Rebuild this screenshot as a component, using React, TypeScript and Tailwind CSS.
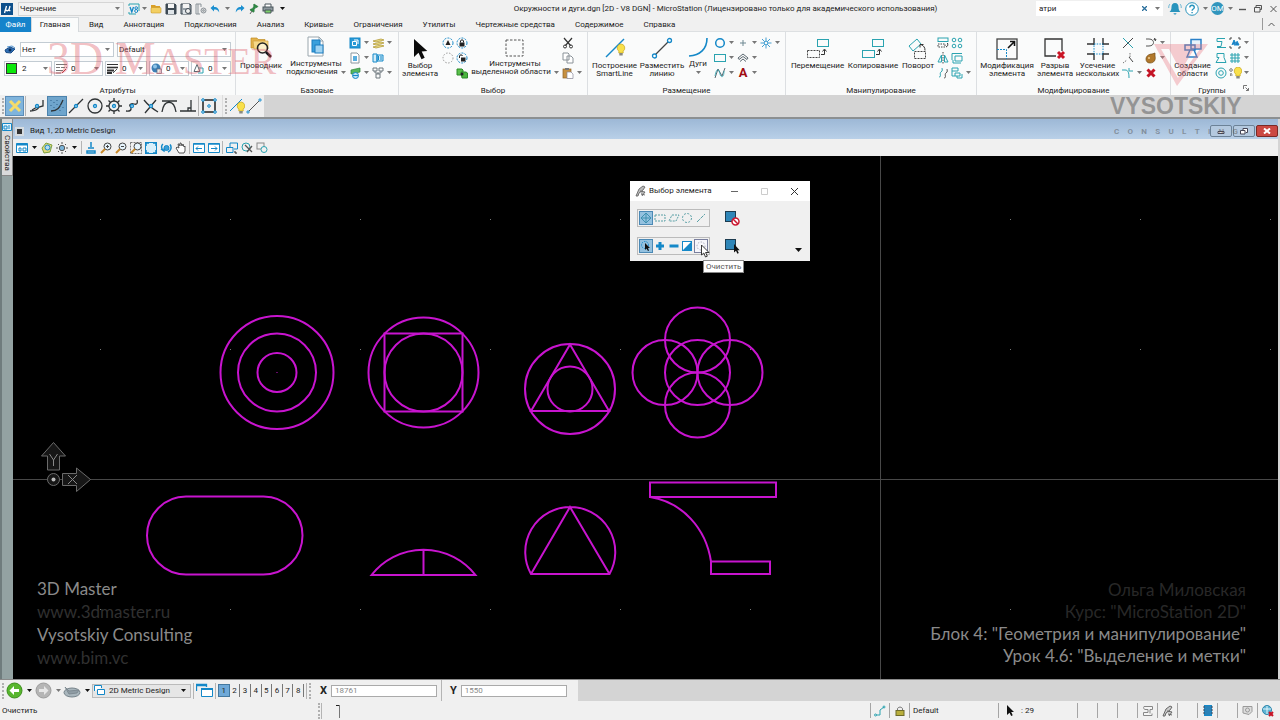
import { ReactNode } from "react";
import { twMerge } from "tailwind-merge";

const BLUE = "#1488c8";
const TEAL = "#2aa3b0";

type IconProps = { w?: number; h?: number; color?: string; sw?: number; children: ReactNode };

const Icon: React.FC<IconProps> = ({ w = 12, h = 12, color = BLUE, sw = 1, children }) => (
  <svg
    className="shrink-0"
    width={w}
    height={h}
    viewBox={`0 0 ${w} ${h}`}
    fill="none"
    stroke={color}
    strokeWidth={sw}
    aria-hidden="true"
  >
    {children}
  </svg>
);

const Caret: React.FC<{ dark?: boolean }> = ({ dark }) => (
  <svg className="shrink-0" width="5" height="3" viewBox="0 0 5 3" aria-hidden="true">
    <path d="M0 0h5L2.5 3z" fill={dark ? "#111" : "#777"} />
  </svg>
);

const Sep: React.FC<{ className?: string }> = ({ className }) => (
  <span className={twMerge("w-px h-4 bg-[#b4b4b4] shrink-0", className)} />
);

const Grip: React.FC = () => (
  <span className="w-[5px] h-4 shrink-0 flex justify-center">
    <span className="w-0 h-full border-l-2 border-dotted border-[#b0b0b0]" />
  </span>
);

/* Icons */
const Logo = () => (
  <Icon w={12} h={12}>
    <rect width="12" height="12" fill="#0d4f8b" stroke="none" />
    <path d="M3.500 10L5.500 3M5 6.500c0 2 2.500 1.500 3.200-.5L9 3M8.200 6c-.3 1.500 0 2 1.200 1.500" stroke="#fff" strokeWidth="1.300" />
  </Icon>
);
const V8 = () => (
  <Icon w={12} h={12}>
    <path d="M1 3V1h10v7M1 9v2h7" stroke={TEAL} />
    <path d="M2 4l1.800 5L5.500 4" strokeWidth="1.300" />
    <circle cx="8.200" cy="5" r="1.300" />
    <circle cx="8.200" cy="8" r="1.500" />
  </Icon>
);
const Folder = () => (
  <Icon w={12} h={10}>
    <path d="M1 3V1h4l1 1h4v7H1z" fill="#d99f26" stroke="none" />
    <rect x="1" y="3.500" width="10" height="5.500" rx="1" fill="#f3cf62" stroke="#c99a2e" strokeWidth=".6" />
  </Icon>
);
const Disk = ({ cog }: { cog?: boolean }) => (
  <Icon w={12} h={12} color="#3b4650">
    <path d="M1 1h9l1 1v9H1z" fill={cog ? "#9aa3aa" : "#3f4a54"} stroke="#3b4650" />
    <rect x="3" y="1" width="6" height="4" fill="#f4f4f4" stroke="none" />
    <rect x="3" y="7" width="6" height="4" fill="#dfe4e8" stroke="none" />
    {cog && <circle cx="8" cy="8" r="2.500" fill="#f0f0f0" />}
  </Icon>
);
const PageCog = () => (
  <Icon w={12} h={12} color="#8a9298">
    <path d="M1 11V1h5v3M1 11h4M3 1v10" />
    <circle cx="8.500" cy="7.500" r="2.500" fill="#ddd" />
    <circle cx="8.500" cy="7.500" r=".8" />
  </Icon>
);
const Undo = ({ flip }: { flip?: boolean }) => (
  <Icon w={10} h={10}>
    <path
      d={flip ? "M9.500 4L6 1v2C2.500 3 .8 5 .8 8.500 2 6 3.500 5.500 6 5.500V7.500z" : "M.5 4L4 1v2c3.500 0 5.200 2 5.200 5.500C8 6 6.500 5.500 4 5.500V7.500z"}
      fill="#1b8fd0"
      stroke="none"
    />
  </Icon>
);
const Pin = () => (
  <Icon w={10} h={12}>
    <path d="M5 1l4 2.500-1 1-1-.3-2 2.600.3 1.600-1 .8L1 7l.7-1 1.700-.2L5 3l-.5-1z" fill="#2f8b45" stroke="#1e6e33" strokeWidth=".6" />
    <path d="M3 8L1 11" stroke="#666" />
  </Icon>
);
const Printer = () => (
  <Icon w={12} h={11} color="#4a565d">
    <path d="M3 4V1h6v3" fill="#fff" />
    <rect x="1" y="4" width="10" height="4" fill="#8d989d" />
    <path d="M3 7h6v3H3z" fill="#7ccf6a" />
  </Icon>
);
const Bell = () => (
  <Icon w={14} h={14}>
    <path d="M7 1c-2.500 0-3.500 2-3.500 4 0 3-1 4-2 5h11c-1-1-2-2-2-5 0-2-1-4-3.500-4z" fill="#2a94bd" stroke="none" />
    <path d="M5.500 11.200h3c0 1.800-3 1.800-3 0z" fill="#2a94bd" stroke="none" />
    <path d="M2 2C1 3 .6 4.500.8 6M12 2c1 1 1.400 2.500 1.200 4" stroke="#6ab5d2" />
  </Icon>
);
const Help = () => (
  <Icon w={14} h={14} color="#2a94bd">
    <circle cx="7" cy="7" r="6.300" fill="#fff" />
    <path d="M4.800 5.500c0-3 4.500-3 4.500 0 0 1.500-2.200 1.500-2.200 3.200M7.100 10v1.300" strokeWidth="1.400" />
  </Icon>
);
const Eye = () => (
  <Icon w={12} h={12}>
    <path d="M1 6l5-3 5 2-4 4-5-.5z" fill="#2f6fb4" stroke="#1b4c86" />
    <path d="M3 3l5-1 3 2" stroke="#5594cf" />
    <circle cx="6" cy="6" r="1.500" fill="#0b2d58" stroke="none" />
  </Icon>
);
const LineStyle = ({ heavy }: { heavy?: boolean }) => (
  <Icon w={11} h={11} color={heavy ? "#333" : "#777"}>
    <path d="M0 1.500h11" />
    <path d="M0 4.500h11" strokeWidth={heavy ? 1.600 : 1} strokeDasharray={heavy ? undefined : "4 1"} />
    <path d="M0 7.500h7M0 10h5" strokeWidth={heavy ? 2 : 1} />
    <path d="M6 10l4-4" stroke={heavy ? "#555" : "#a33"} />
  </Icon>
);
const Globe = () => (
  <Icon w={11} h={11}>
    <circle cx="5" cy="5" r="4.500" fill="#3d7fb5" stroke="none" />
    <circle cx="4" cy="3.500" r="2" fill="#8fc4e8" stroke="none" />
    <rect x="6" y="6" width="4.500" height="4.500" fill="#e9eef2" stroke="#667" strokeWidth=".7" />
  </Icon>
);
const Shapes = () => (
  <Icon w={11} h={11}>
    <path d="M4 1.500L7 8.500H1z" stroke="#5a6a72" />
    <path d="M6 5h4v5H5" stroke={TEAL} />
  </Icon>
);

const Explorer = () => (
  <Icon w={24} h={24}>
    <path d="M2 1h6l1 1.500h7V11H2z" fill="#e3b34b" stroke="#c08e27" strokeWidth=".7" />
    <path d="M4 4h15v8H5z" fill="#f6d887" stroke="#cf9f3c" strokeWidth=".7" />
    <circle cx="13.500" cy="11" r="5" fill="#fdf6dc" fillOpacity=".8" stroke="#222" strokeWidth="1.600" />
    <path d="M17 15l5 5" stroke="#111" strokeWidth="2.500" />
  </Icon>
);
const AttachTools = () => (
  <Icon w={22} h={24} color="#9aa6ad">
    <path d="M3 1h11l4 4v15H3z" fill="#fff" />
    <path d="M14 1v4h4" />
    <rect x="7" y="4" width="8" height="12" fill="#3aa0dc" stroke="#1b7cc0" />
    <rect x="10" y="9" width="8" height="8" fill="#9fd3f2" stroke="#1b7cc0" />
  </Icon>
);
const Pointer = () => (
  <Icon w={18} h={24}>
    <path d="M3 2v18l4.500-4.200 3 6.400 3.200-1.500-3-6.200 5.600-.5z" fill="#0b0b0b" stroke="none" />
  </Icon>
);
const Marquee = () => (
  <Icon w={22} h={20} color="#555">
    <rect x="2" y="2" width="17" height="16" strokeDasharray="2.500 1.500" />
  </Icon>
);
const Bulb = ({ x, y }: { x: number; y: number }) => (
  <g transform={`translate(${x} ${y})`}>
    <path d="M4 0a4 4 0 0 0-2.200 7.200V9h4.400V7.200A4 4 0 0 0 4 0z" fill="#f9e04a" stroke="#c8a81c" strokeWidth=".7" />
    <rect x="2.300" y="9" width="3.400" height="2.500" fill="#8a8a80" stroke="none" />
  </g>
);
const SmartLine = () => (
  <Icon w={24} h={24}>
    <path d="M3 20L21 2" strokeWidth="1.500" />
    <Bulb x={14} y={7} />
  </Icon>
);
const LineTool = () => (
  <Icon w={22} h={24}>
    <path d="M4 18L18 4" stroke="#444" strokeWidth="1.200" />
    <circle cx="3.500" cy="19" r="2" fill="#fff" strokeWidth="1.300" />
    <circle cx="18.500" cy="3.500" r="2" fill="#fff" strokeWidth="1.300" />
  </Icon>
);
const ArcTool = () => (
  <Icon w={22} h={22}>
    <path d="M20 1c0 11-7 17.500-18 18" strokeWidth="1.600" />
  </Icon>
);
const MoveTool = ({ copy }: { copy?: boolean }) => (
  <Icon w={24} h={24} color={TEAL}>
    <rect x="11.500" y="2.500" width="11" height="7" />
    <rect x="1.500" y="13.500" width="12" height="7" stroke={copy ? TEAL : "#444"} strokeDasharray={copy ? undefined : "2 1"} />
    <path d="M15 17.500h3.500V13M16.500 14.500l2-2.500 2 2.500" stroke="#333" />
  </Icon>
);
const RotateTool = () => (
  <Icon w={22} h={24} color={TEAL}>
    <path d="M2 9l8-7 4 5-8 7z" />
    <rect x="7.500" y="14.500" width="11" height="7" stroke="#444" strokeDasharray="2 1" />
    <path d="M18 13.500c0-3-1-4.500-4-6M16.500 7.500H13v3" stroke="#333" />
  </Icon>
);
const ModifyTool = () => (
  <Icon w={24} h={24} color="#444">
    <rect x="2" y="2" width="20" height="20" strokeWidth="1.300" />
    <path d="M2 12.500h9.500V22" stroke={BLUE} strokeDasharray="2 1" />
    <path d="M13 11l6-6M15 4.500h4.500V9" stroke="#111" strokeWidth="1.600" />
  </Icon>
);
const BreakTool = () => (
  <Icon w={24} h={24} color="#333">
    <path d="M13 19H2V2h17v12" strokeWidth="1.300" />
    <path d="M15 15l6 6M21 15l-6 6" stroke="#cb1526" strokeWidth="3" />
  </Icon>
);
const TrimTool = () => (
  <Icon w={24} h={24} color="#333">
    <path d="M8 1v7M8 16v7M17 1v7M17 16v7M1 7h7M16 7h7M1 17h7M16 17h7" strokeWidth="1.400" />
    <path d="M8 7h9v10H8z" stroke={BLUE} strokeDasharray="1.500 1.200" />
  </Icon>
);
const RegionTool = () => (
  <Icon w={20} h={24} color="#2a80c8" sw={1.500}>
    <path d="M8 2.500h10v9.500H8z" fill="#e8f3fb" />
    <path d="M2 8h10v5H2z" />
    <path d="M7 13l-3 7h10l-3-7" />
  </Icon>
);

const rowIcons = {
  cube: (
    <Icon>
      <rect x="1" y="1" width="10" height="10" fill="#2a9ad6" />
      <path d="M3.500 4.500h4v4h-4zM5 3h4v4" stroke="#fff" />
    </Icon>
  ),
  layers: (
    <Icon w={13}>
      <path d="M1 4l8-2 3 1-8 2zM1 7l8-2 3 1-8 2zM1 10l8-2 3 1-8 2z" fill="#f2e48c" stroke="#b29b38" strokeWidth=".8" />
    </Icon>
  ),
  doc: (
    <Icon color="#8a969d">
      <path d="M2 1h6l2 2v8H2z" fill="#fff" />
      <rect x="4" y="4" width="4" height="5" fill="#59aede" stroke="none" />
    </Icon>
  ),
  sheet: (
    <Icon>
      <path d="M1 2h4v8H1zM5 3h6v6H5z" fill="#d2ecf8" />
      <path d="M6.500 4v4M9 4v4" />
    </Icon>
  ),
  raster: (
    <Icon w={13}>
      <path d="M2 3l9-2v4L2 7z" fill="#55b65e" stroke="#2d8437" strokeWidth=".7" />
      <circle cx="6.500" cy="8.500" r="3" fill="#bfe3f5" />
      <path d="M4 8.500h5" />
    </Icon>
  ),
  tree: (
    <Icon color="#6d777d">
      <path d="M1 1h4v3H1zM7 1h4v3H7zM4 7h4v4H4zM3 4v2h6V4M6 6v1" />
    </Icon>
  ),
  selNew: (
    <Icon>
      <circle cx="6" cy="6" r="5" strokeDasharray="2 1.200" />
      <path d="M6 3l2.500 5h-5z" fill="#222" stroke="none" />
    </Icon>
  ),
  selLock: (
    <Icon>
      <circle cx="6" cy="6" r="5" strokeDasharray="2 1.200" />
      <rect x="3.500" y="5.500" width="5" height="4" fill="#222" stroke="none" />
      <path d="M4.500 5.500V4c0-1.500 3-1.500 3 0v1.500" stroke="#222" />
    </Icon>
  ),
  selNone: (
    <Icon color="#999">
      <circle cx="6" cy="6" r="5" strokeDasharray="1.500 1.500" />
    </Icon>
  ),
  selUnlock: (
    <Icon>
      <circle cx="6" cy="6" r="5" strokeDasharray="2 1.200" />
      <rect x="5" y="5.500" width="4.500" height="4" fill="#222" stroke="none" />
      <path d="M3.500 6V4c0-1.500 3-1.500 3 0" stroke="#222" />
    </Icon>
  ),
  group: (
    <Icon w={13}>
      <path d="M1 2h5l1 1v5H1z" fill="#5ac04b" stroke="#2c8a29" />
      <path d="M5 5h5l1.500 1v5H6z" fill="#4bb53e" stroke="#2c8a29" />
      <circle cx="6" cy="7" r="1.500" fill="#222" stroke="none" />
    </Icon>
  ),
  cut: (
    <Icon color="#333">
      <path d="M2 1l6.500 7.500M10 1L3.500 8.500" strokeWidth="1.200" />
      <circle cx="3" cy="9.500" r="1.500" />
      <circle cx="9" cy="9.500" r="1.500" />
    </Icon>
  ),
  copy: (
    <Icon color="#8a9298">
      <path d="M1 1h5l1 1v6H1zM5 4h4l2 2v5H5z" fill="#fff" />
    </Icon>
  ),
  paste: (
    <Icon>
      <rect x="1" y="2" width="8" height="9" fill="#c69040" stroke="#8d6224" strokeWidth=".7" />
      <rect x="3" y="1" width="4" height="2" fill="#777" stroke="none" />
      <path d="M5 5h4l2 2v4.500H5z" fill="#fff" stroke="#889" strokeWidth=".7" />
    </Icon>
  ),
  circle: (
    <Icon>
      <circle cx="6" cy="6" r="4.300" strokeWidth="1.500" />
    </Icon>
  ),
  plus: (
    <Icon color="#6d8791">
      <path d="M6 3v6M3 6h6" />
    </Icon>
  ),
  spark: (
    <Icon>
      <circle cx="6" cy="6" r="2" />
      <path d="M6 .5v3M6 8.500v3M.5 6h3M8.500 6h3M2 2l2 2M8 8l2 2M10 2L8 4M4 8l-2 2" strokeWidth=".8" />
    </Icon>
  ),
  rect: (
    <Icon color={TEAL}>
      <rect x=".5" y="2.500" width="11" height="7" />
    </Icon>
  ),
  chevrons: (
    <Icon color="#5b6870">
      <path d="M1 6l5-4 5 4-1 1.500L6 4.500 2 7.500zM3 9.500l3-2.500 3 2.500" />
    </Icon>
  ),
  curve: (
    <Icon color="#5b6870">
      <path d="M1 11L4 2l4 7 3-8" />
      <path d="M1 9c2-10 4-6 5-2s4 4 4-3" stroke={TEAL} strokeWidth=".8" />
    </Icon>
  ),
  text: <span className="font-bold text-[13px] leading-3 text-[#a00c12]">A</span>,
  offset: (
    <Icon color={TEAL}>
      <rect x="1" y="1" width="10" height="3.500" />
      <path d="M1 7h7v3H1z" stroke="#444" strokeDasharray="1.500 1" />
      <path d="M9 10c2-1 2-2 1.500-4" stroke="#333" />
    </Icon>
  ),
  array: (
    <Icon color={TEAL}>
      <circle cx="3" cy="3" r="1.800" />
      <circle cx="9" cy="3" r="1.800" />
      <circle cx="3" cy="9" r="1.800" />
      <circle cx="9" cy="9" r="1.800" />
    </Icon>
  ),
  mirror: (
    <Icon color={TEAL}>
      <path d="M4.500 3v7H1zM7.500 3v7H11z" />
      <path d="M6 0v12" stroke="#444" strokeDasharray="1.500 1" />
    </Icon>
  ),
  scale: (
    <Icon color={TEAL}>
      <path d="M1 1.500h10M1 1.500V8M4 4h7v5H4zM2 8v3h8" />
    </Icon>
  ),
  stretch: (
    <Icon color={TEAL}>
      <path d="M2 10c3 0 0-4 2-5s1-3 1-4" />
      <path d="M7 11c3 0 0-4 2-5s1-3 1-4" stroke="#555" />
    </Icon>
  ),
  align: (
    <Icon color={TEAL}>
      <path d="M1 1h6v3H1zM1 4v5h3M4 6h5v3H4zM6 9v2h5V7" />
    </Icon>
  ),
  trimX: (
    <Icon color="#444">
      <path d="M1 11L11 1" />
      <path d="M1 1l10 10" stroke={TEAL} />
    </Icon>
  ),
  extend: (
    <Icon color="#444">
      <path d="M7 5l4 5" />
      <path d="M1 11l4-3M8 5V1" stroke="#777" strokeDasharray="1.500 1" />
    </Icon>
  ),
  fillet: (
    <Icon color={TEAL}>
      <path d="M0 3h3c3 0 4 2 4 8M7 1v3h4" />
    </Icon>
  ),
  fence: (
    <Icon color="#555">
      <path d="M1 2h3c6 0 6 7 0 7H1" />
      <path d="M9 3l1-2M10 4l1-2" stroke="#222" />
    </Icon>
  ),
  hatch: (
    <Icon>
      <path d="M1 7c0-3 3-5 6-5l3-1v3c1 4-1 7-5 7-3 0-4-2-4-4z" fill="#b1782b" stroke="#734c17" strokeWidth=".7" />
      <circle cx="4" cy="6" r="1" fill="#efcf96" stroke="none" />
    </Icon>
  ),
  del: (
    <Icon color="#c41425" sw={3}>
      <path d="M2.500 2.500l7 7M9.500 2.500l-7 7" />
    </Icon>
  ),
  chain: (
    <Icon color={TEAL}>
      <path d="M2 1.500h8M2 1.500v3h5l-1 5H2M2 10.500h9" />
    </Icon>
  ),
  ungroup: (
    <Icon>
      <path d="M1 3V1h2M9 1h2v2M11 9v2H9M3 11H1V9" stroke="#444" />
      <path d="M3 8l2-5 2 4M5 8h5l-2-4" fill="#1c7fc5" />
    </Icon>
  ),
  shape: (
    <Icon color={TEAL}>
      <path d="M2 1.500h7v4l2 5H1l3-5H2z" />
    </Icon>
  ),
  hash: (
    <Icon color={TEAL}>
      <path d="M3 1v10M6 1v10M9 1v10M1 3h10M1 6h10M1 9h10" />
    </Icon>
  ),
  target: (
    <Icon color={TEAL}>
      <circle cx="6" cy="6" r="5" />
      <circle cx="6" cy="6" r="2.300" />
    </Icon>
  ),
  bulb: (
    <Icon w={13} color="#555">
      <path d="M0 3h4M2 1v8M1 8h3" strokeDasharray="1.500 1" />
      <Bulb x={5} y={0} />
    </Icon>
  ),
};

/* Ribbon parts */
type SmallItem = { label: string; icon: ReactNode; caret?: boolean };

const Stack: React.FC<{ items: (SmallItem | null)[]; className?: string }> = ({ items, className }) => (
  <div className={twMerge("flex flex-col items-start shrink-0", className)}>
    {items.map((item, index) =>
      item ? (
        <button key={index} aria-label={item.label} className="h-[15px] flex items-center">
          <span className="w-[14px] flex justify-center">{item.icon}</span>
          {item.caret && (
            <span className="w-[9px] flex justify-center">
              <Caret />
            </span>
          )}
        </button>
      ) : (
        <span key={index} className="h-[15px]" />
      )
    )}
  </div>
);

const BigButton: React.FC<{ icon: ReactNode; lines: string[]; caret?: boolean; className?: string }> = ({
  icon,
  lines,
  caret,
  className,
}) => (
  <button className={twMerge("shrink-0 flex flex-col items-center leading-2 whitespace-nowrap", className)}>
    <span className={twMerge("h-[27px] flex items-center", caret && "h-[25px]")}>{icon}</span>
    {lines.map((line, index) => (
      <span key={line} className="flex items-center gap-[3px]">
        {line}
        {caret && lines.length > 1 && index === lines.length - 1 && <Caret />}
      </span>
    ))}
    {caret && lines.length === 1 && (
      <span className="h-2 flex items-center">
        <Caret />
      </span>
    )}
  </button>
);

const Group: React.FC<{ title: string; className?: string; children: ReactNode }> = ({ title, className, children }) => (
  <section className={twMerge("relative shrink-0 flex flex-col border-r border-[#dcdfe2]", className)}>
    <div className="flex items-start pt-[3px] h-[51px]">{children}</div>
    <h2 className="text-center leading-[15px] h-3">{title}</h2>
  </section>
);

const Combo: React.FC<{ label: string; value: string; icon?: ReactNode; className?: string }> = ({
  label,
  value,
  icon,
  className,
}) => (
  <label className={twMerge("relative flex items-center gap-1 h-[15px] px-px border border-[#c3ccd3] bg-white", className)}>
    {icon}
    <select aria-label={label} className="appearance-none flex-1 min-w-0 h-full bg-transparent outline-none">
      <option>{value}</option>
    </select>
    <span className="absolute right-[3px]">
      <Caret />
    </span>
  </label>
);

const tabs = [
  "Вид",
  "Аннотация",
  "Подключения",
  "Анализ",
  "Кривые",
  "Ограничения",
  "Утилиты",
  "Чертежные средства",
  "Содержимое",
  "Справка",
];

const quickTools: { label: string; icon: ReactNode; className: string }[] = [
  { label: "Открыть", icon: <Folder />, className: "w-[14px]" },
  { label: "Сохранить", icon: <Disk />, className: "w-[15px]" },
  { label: "Сохранить настройки", icon: <Disk cog />, className: "w-[15px]" },
  { label: "Сжать", icon: <PageCog />, className: "w-[15px]" },
  { label: "Отменить", icon: <Undo />, className: "w-[14px]" },
  { label: "История", icon: <Caret />, className: "w-[10px]" },
  { label: "Повторить", icon: <Undo flip />, className: "w-[15px]" },
  { label: "Закрепить", icon: <Pin />, className: "w-[14px]" },
  { label: "Печать", icon: <Printer />, className: "w-[14px]" },
  { label: "Настройка панели", icon: <Caret dark />, className: "w-[14px]" },
];

const TitleBar = () => (
  <header className="h-[17px] flex items-center shrink-0 bg-[#f0f0f0]">
    <span className="w-[18px] pl-px">
      <Logo />
    </span>
    <Combo label="Рабочий процесс" value="Черчение" className="w-[106px] h-[14px] bg-[#f3f3f3] border-[#d5d5d5]" />
    <button aria-label="DGN" className="flex items-center gap-[2px] pl-1 w-[25px]">
      <V8 />
      <Caret />
    </button>
    {quickTools.map((tool) => (
      <button key={tool.label} aria-label={tool.label} className={twMerge("flex justify-center", tool.className)}>
        {tool.icon}
      </button>
    ))}
    <h1 className="flex-1 pl-[126px] whitespace-nowrap text-center">
      Окружности и дуги.dgn [2D - V8 DGN] - MicroStation (Лицензировано только для академического использования)
    </h1>
    <label className="flex items-center w-[127px] h-[15px] bg-white px-[3px] gap-2">
      <input aria-label="Поиск" defaultValue="атри" className="flex-1 min-w-0 outline-none" />
      <Icon w={5} h={5} color="#2a6f9c" sw={1.300}>
        <path d="M0 0l5 5M5 0L0 5" />
      </Icon>
      <Caret />
    </label>
    <div className="flex items-center gap-[3px] pl-[5px] w-[117px]">
      <button aria-label="Уведомления">
        <Bell />
      </button>
      <button aria-label="Помощь" className="flex items-center gap-1">
        <Help />
        <Caret />
      </button>
      <button className="flex items-center gap-1">
        <span className="size-[13px] rounded-full bg-[#3195bd] text-white text-center leading-[13px]">OM</span>
        <Caret />
      </button>
      <button aria-label="Свернуть" className="ml-auto mr-[5px]">
        <Icon w={7} h={8} color="#555">
          <path d="M0 4.500h7" strokeWidth="1.400" />
        </Icon>
      </button>
      <button aria-label="Восстановить" className="mr-[5px]">
        <Icon w={8} h={8} color="#555">
          <path d="M2 2V.5h5.500v4H6M.5 2.500H6V7H.500z" />
        </Icon>
      </button>
      <button aria-label="Закрыть" className="mr-[3px]">
        <Icon w={7} h={8} color="#555">
          <path d="M.5 1l6 6M6.500 1l-6 6" />
        </Icon>
      </button>
    </div>
  </header>
);

const TabBar = () => (
  <nav className="flex items-stretch h-[15px] shrink-0 bg-[#f0f0f0] leading-4">
    <button className="w-[31px] bg-[#1583cb] text-white">Файл</button>
    <button className="w-[48px] bg-[#fafbfb] border border-b-0 border-[#d5d9dc] leading-[14px]">Главная</button>
    <div className="flex flex-1 border-b border-[#dde0e2]">
      {tabs.map((tab) => (
        <button key={tab} className="px-[10px] whitespace-nowrap">
          {tab}
        </button>
      ))}
      <button aria-label="Свернуть ленту" className="ml-auto w-[18px] my-px border-l border-[#999] flex items-center justify-center">
        <Icon w={7} h={5} color="#555">
          <path d="M.5 4l3-3 3 3" />
        </Icon>
      </button>
    </div>
  </nav>
);

const Watermarks = () => (
  <div className="absolute inset-0 pointer-events-none">
    <div className="absolute left-[47px] top-1 font-['Liberation_Serif',serif] text-[#de5a66]/40 text-[46px] leading-[46px] whitespace-nowrap">
      3D M<span className="text-[38px]">ASTER</span>
    </div>
    <svg className="absolute right-[72px] top-3" width="54" height="42" viewBox="0 0 54 42" aria-hidden="true">
      <path d="M0 0h54L23 42zM7 5l17 29L27 28 15 5zM31 20l9-15h6L33 23z" fill="#e7737d" fillOpacity=".35" fillRule="evenodd" />
    </svg>
    <div className="absolute right-[38px] top-[60px] w-[132px] text-[#555]/50">
      <div className="font-['Liberation_Sans',sans-serif] font-bold text-[23px] leading-7">VYSOTSKIY</div>
      <div className="flex justify-between px-1 pt-[6px] font-bold leading-3">
        {"CONSULTING".split("").map((letter, index) => (
          <span key={index}>{letter}</span>
        ))}
      </div>
    </div>
  </div>
);

const Ribbon = () => (
  <div className="relative flex h-[63px] shrink-0 bg-[#fafbfb]">
    <Group title="Атрибуты" className="w-[236px]">
      <div className="flex-1 flex flex-col gap-1 pt-[7px] pl-1 pr-1">
        <div className="flex items-center gap-[3px]">
          <span className="w-[13px]">
            <Eye />
          </span>
          <Combo label="Шаблон" value="Нет" className="w-[94px]" />
          <Combo label="Слой" value="Default" className="flex-1" />
        </div>
        <div className="flex items-center gap-[2px]">
          <Combo
            label="Цвет"
            value="2"
            className="w-12 gap-[5px]"
            icon={<span className="size-[11px] bg-[#0be80b] border border-[#333] shrink-0" />}
          />
          <Combo label="Стиль линии" value="0" className="w-[49px]" icon={<LineStyle />} />
          <Combo label="Толщина" value="0" className="w-[42px]" icon={<LineStyle heavy />} />
          <Combo label="Прозрачность" value="0" className="flex-1" icon={<Globe />} />
          <Combo label="Приоритет" value="0" className="flex-1" icon={<Shapes />} />
        </div>
      </div>
    </Group>
    <Group title="Базовые" className="w-[163px]">
      <BigButton icon={<Explorer />} lines={["Проводник"]} className="w-[50px]" />
      <BigButton icon={<AttachTools />} lines={["Инструменты", "подключения"]} caret className="w-[60px]" />
      <Stack
        className="ml-[2px]"
        items={[
          { label: "Модели", icon: rowIcons.cube, caret: true },
          { label: "Ссылки", icon: rowIcons.doc, caret: true },
          { label: "Растры", icon: rowIcons.raster, caret: true },
        ]}
      />
      <Stack
        items={[
          { label: "Слои", icon: rowIcons.layers, caret: true },
          { label: "Фильтр слоев", icon: rowIcons.sheet },
          { label: "Структура", icon: rowIcons.tree, caret: true },
        ]}
      />
    </Group>
    <Group title="Выбор" className="w-[189px]">
      <BigButton icon={<Pointer />} lines={["Выбор", "элемента"]} className="w-[42px]" />
      <Stack
        items={[
          { label: "Выбрать все", icon: rowIcons.selNew },
          { label: "Снять выбор", icon: rowIcons.selNone },
          null,
        ]}
      />
      <Stack
        items={[
          { label: "Заблокировать", icon: rowIcons.selLock },
          { label: "Разблокировать", icon: rowIcons.selUnlock },
          { label: "Изменить группу", icon: rowIcons.group },
        ]}
      />
      <BigButton icon={<Marquee />} lines={["Инструменты", "выделенной области"]} caret className="w-[92px]" />
      <Stack
        items={[
          { label: "Вырезать", icon: rowIcons.cut },
          { label: "Копировать", icon: rowIcons.copy },
          { label: "Вставить", icon: rowIcons.paste, caret: true },
        ]}
      />
    </Group>
    <Group title="Размещение" className="w-[198px]">
      <BigButton icon={<SmartLine />} lines={["Построение", "SmartLine"]} className="w-[53px]" />
      <BigButton icon={<LineTool />} lines={["Разместить", "линию"]} className="w-[42px]" />
      <BigButton icon={<ArcTool />} lines={["Дуги"]} caret className="w-[30px]" />
      <Stack
        items={[
          { label: "Окружность", icon: rowIcons.circle, caret: true },
          { label: "Блок", icon: rowIcons.rect, caret: true },
          { label: "Кривая", icon: rowIcons.curve, caret: true },
        ]}
      />
      <Stack
        items={[
          { label: "Точка", icon: rowIcons.plus, caret: true },
          { label: "Мультилиния", icon: rowIcons.chevrons, caret: true },
          { label: "Текст", icon: rowIcons.text, caret: true },
        ]}
      />
      <Stack items={[{ label: "Ячейка", icon: rowIcons.spark, caret: true }]} />
    </Group>
    <Group title="Манипулирование" className="w-[191px]">
      <BigButton icon={<MoveTool />} lines={["Перемещение"]} className="w-[57px] ml-[3px]" />
      <BigButton icon={<MoveTool copy />} lines={["Копирование"]} className="w-[54px]" />
      <BigButton icon={<RotateTool />} lines={["Поворот"]} className="w-[36px]" />
      <Stack
        items={[
          { label: "Подобие", icon: rowIcons.offset },
          { label: "Отражение", icon: rowIcons.mirror },
          { label: "Растяжение", icon: rowIcons.stretch },
        ]}
      />
      <Stack
        items={[
          { label: "Массив", icon: rowIcons.array },
          { label: "Масштаб", icon: rowIcons.scale },
          { label: "Выравнивание", icon: rowIcons.align, caret: true },
        ]}
      />
    </Group>
    <Group title="Модифицирование" className="w-[194px]">
      <BigButton icon={<ModifyTool />} lines={["Модификация", "элемента"]} className="w-[58px] ml-px" />
      <BigButton icon={<BreakTool />} lines={["Разрыв", "элемента"]} className="w-[38px]" />
      <BigButton icon={<TrimTool />} lines={["Усечение", "нескольких"]} className="w-[47px]" />
      <Stack
        items={[
          { label: "Усечь", icon: rowIcons.trimX },
          { label: "Продлить", icon: rowIcons.extend },
          { label: "Сопряжение", icon: rowIcons.fillet, caret: true },
        ]}
      />
      <Stack
        items={[
          { label: "Вершина", icon: rowIcons.fence, caret: true },
          { label: "Штриховка", icon: rowIcons.hatch, caret: true },
          { label: "Удалить", icon: rowIcons.del },
        ]}
      />
    </Group>
    <Group title="Группы" className="w-[83px]">
      <BigButton icon={<RegionTool />} lines={["Создание", "области"]} className="w-[43px]" />
      <Stack
        items={[
          { label: "Цепочка", icon: rowIcons.chain },
          { label: "Форма", icon: rowIcons.shape },
          { label: "Отверстие", icon: rowIcons.target },
        ]}
      />
      <Stack
        items={[
          { label: "Разгруппировать", icon: rowIcons.ungroup, caret: true },
          { label: "Сетка", icon: rowIcons.hash, caret: true },
          { label: "Группа", icon: rowIcons.bulb, caret: true },
        ]}
      />
      <button aria-label="Параметры групп" className="absolute right-1 bottom-1">
        <Icon w={6} h={6} color="#777">
          <path d="M.5 4V.5H4M2.500 2.500l3 3M5.500 3v2.500H3" />
        </Icon>
      </button>
    </Group>
    <Watermarks />
  </div>
);

const snapIcons: { label: string; icon: ReactNode }[] = [
  { label: "Ближайшая", icon: <path d="M1 13c6 0 8-2 9-4l4-1V2M3 12l5-3" /> },
  { label: "Ключевая точка", icon: <><path d="M2 13c8 0 9-5 12-11" /><path d="M2 2v1M5 4v1M8 2v1M2 7v1M5 9v1M11 7v1M8 6v1M11 12v1M14 9v1" stroke="#3c6f98" /></> },
  { label: "Средняя точка", icon: <path d="M1 15L15 1" /> },
  { label: "Центр", icon: <circle cx="8" cy="8" r="7" /> },
  { label: "Точка вставки", icon: <><circle cx="8" cy="8" r="5" /><path d="M8 0v3M8 13v3M0 8h3M13 8h3M2.500 2.500l2 2M11.500 11.500l2 2M13.500 2.500l-2 2M4.500 11.500l-2 2" /></> },
  { label: "Бисектор", icon: <path d="M2 13c7 1 5-4 4-5s1-3 4-2 4-1 3-4" /> },
  { label: "Пересечение", icon: <path d="M1 2c4 5 9 9 14 12M2 15L13 2" /> },
  { label: "Касательная", icon: <path d="M1 3h15M1 14C3 1 13 1 15 14" /> },
  { label: "Перпендикуляр", icon: <path d="M0 13h16M11 13V2M8 13v-3h3" /> },
];

const SnapBar = () => (
  <div className="flex h-[24px] shrink-0 bg-[#d4d4d4] border-b-2 border-[#8b8f91]">
    <div className="flex items-center bg-[#f0f0f0] pr-1">
      <Grip />
      <button aria-label="AccuSnap" className="w-[19px] h-[20px] bg-[#7fb4dc] border border-[#5b8db8] flex items-center justify-center">
        <Icon w={14} h={14} color="#f5dc6a" sw={3}>
          <path d="M2 2l10 10M12 2L2 12" />
        </Icon>
      </button>
      <Sep className="ml-px mr-[2px] h-5" />
      <div className="flex w-[169px]">
        {snapIcons.map((snap, index) => (
          <button
            key={snap.label}
            aria-label={snap.label}
            className={twMerge("flex-1 h-5 flex items-center justify-center", index === 1 && "bg-[#6fa5cc] border border-[#4c83ad]")}
          >
            <Icon w={16} h={16} color="#2f3335" sw={1.300}>
              {snap.icon}
              {index !== 1 && index < 7 && <circle cx="8" cy="8" r="1.500" fill="#bfe6fa" stroke={BLUE} />}
            </Icon>
          </button>
        ))}
      </div>
      <Sep className="mx-px h-5" />
      <button aria-label="Мультипривязка" className="px-px">
        <Icon w={16} h={16} color="#222">
          <rect x="2" y="2" width="12" height="12" strokeWidth="1.500" />
          <g fill="#bfe6fa" stroke={BLUE}>
            <circle cx="2" cy="2" r="1.300" />
            <circle cx="14" cy="2" r="1.300" />
            <circle cx="2" cy="14" r="1.300" />
            <circle cx="14" cy="14" r="1.300" />
            <circle cx="8" cy="8" r="1.300" />
          </g>
        </Icon>
      </button>
    </div>
    <div className="flex items-center bg-[#f0f0f0] border-l border-[#ddd] pr-px">
      <Grip />
      <button aria-label="SmartLine" className="pl-px">
        <Icon w={16} h={16}>
          <path d="M1 13L13 1" />
          <Bulb x={8} y={4} />
        </Icon>
      </button>
      <button aria-label="Линия" className="px-px">
        <Icon w={16} h={16} color="#555">
          <path d="M2 14L14 2" />
          <path d="M1 13h2v2H1zM13 1h2v2h-2z" fill="#bfe6fa" stroke={BLUE} strokeWidth=".8" />
        </Icon>
      </button>
    </div>
  </div>
);

const lens = (extra: ReactNode) => (
  <Icon color="#444">
    <circle cx="7.500" cy="4.500" r="3.500" fill="#e6f4fc" />
    <path d="M5 7L1 11" stroke="#c98a2a" strokeWidth="2" />
    {extra}
  </Icon>
);

type ViewTool = { label: string; icon: ReactNode; className?: string; sep?: boolean };

const viewTools: ViewTool[] = [
  { label: "Параметры вида", className: "w-[15px]", icon: <Icon><path d="M.5 1.500h11v9H.5z" fill="#fff" /><path d="M.5 2.500h11" strokeWidth="2" /><path d="M3 6h2v3H3zM7 6h3v3H7z" /></Icon> },
  { label: "Список видов", className: "w-[10px]", icon: <Caret dark /> },
  { label: "Стиль отображения", className: "w-[15px]", icon: <Icon><path d="M1 6l4-5 6 2-2 7-6 1z" fill="#e0d87a" stroke="#7da13e" /><circle cx="6.500" cy="5.500" r="2.500" fill="#b6dcf0" /></Icon> },
  { label: "Яркость", className: "w-[15px]", icon: <Icon color="#555"><circle cx="6" cy="6" r="2.700" fill="#79b3d8" /><path d="M6 0v2M6 10v2M0 6h2M10 6h2M2 2l1 1M9 9l1 1M10 2L9 3M3 9l-1 1" /></Icon> },
  { label: "Список яркости", className: "w-[11px]", icon: <Caret dark />, sep: true },
  { label: "Обновить", icon: <Icon><path d="M6 0v5M3 6h6M2 9h8v2H2z" strokeWidth="1.500" /></Icon> },
  { label: "Увеличить", icon: lens(<path d="M6 4.500h3M7.500 3v3" />) },
  { label: "Уменьшить", icon: lens(<path d="M6 4.500h3" />) },
  { label: "Окно", icon: lens(<path d="M.5 .5h11v11H.5z" strokeDasharray="2 1" strokeWidth=".7" />) },
  { label: "Вписать", icon: <Icon><rect x=".5" y=".5" width="11" height="11" fill="#d8effa" /><path d="M1 4V1h3M8 1h3v3M11 8v3H8M4 11H1V8" strokeWidth="1.500" /></Icon> },
  { label: "Повернуть", icon: <Icon><path d="M3 2C1 3.500 1 7 3.500 8.500M1 7l3 2 .5-3M8 10c3-1 4-5 2-7.500" strokeWidth="1.500" /><circle cx="6.500" cy="6" r="2.500" fill="#3b9fd8" /></Icon> },
  { label: "Панорама", sep: true, icon: <Icon color="#444"><path d="M4 11L1 6l1-1 2 1-1-4h1l1 2V1h1l1 3 1-2 1 3 1-1v5l-1 2z" fill="#fff" strokeWidth=".9" /></Icon> },
  { label: "Предыдущий вид", icon: <Icon><path d="M.5 1.500h11v9H.5z" fill="#fff" /><path d="M.5 2h11" strokeWidth="1.500" /><path d="M9 6.500H3M5 4.500l-2 2 2 2" /></Icon> },
  { label: "Следующий вид", sep: true, icon: <Icon><path d="M.5 1.500h11v9H.5z" fill="#fff" /><path d="M.5 2h11" strokeWidth="1.500" /><path d="M3 6.500h6M7 4.500l2 2-2 2" /></Icon> },
  { label: "Копировать вид", icon: <Icon><path d="M4 5V1h7.500v6H8M.5 5.500H7v5H.5z" /><path d="M9 9v2h2" stroke="#222" /></Icon> },
  { label: "Отсечь", icon: <Icon color="#555"><circle cx="5" cy="5" r="4" stroke={TEAL} /><path d="M4 3l7 7M11 4l-5 6" strokeWidth="1.300" /></Icon> },
  { label: "Маска", icon: <Icon color="#888"><rect x="1" y="1" width="7" height="6" /><circle cx="8" cy="7.500" r="3" fill="#f0f0f0" stroke={TEAL} /></Icon> },
];

const winButton = "w-[22px] h-3 border border-[#6c8297] rounded-xs flex items-center justify-center";

const ViewHeader = () => (
  <>
    <div className="flex items-center h-5 shrink-0 bg-linear-to-b from-[#9db8d6] to-[#b9d0e8] px-1 pt-1">
      <span className="size-[5px] bg-[#333] outline-2 outline-[#d5dbe0]" />
      <span className="pl-2">Вид 1, 2D Metric Design</span>
      <div className="flex gap-px ml-auto -mr-1">
        <button aria-label="Свернуть вид" className={twMerge(winButton, "bg-[#b4c9df]")}>
          <Icon w={8} h={5} color="#445"><path d="M1 2.500h6v2H1z" fill="#fff" /></Icon>
        </button>
        <button aria-label="Развернуть вид" className={twMerge(winButton, "bg-[#b4c9df]")}>
          <Icon w={8} h={7} color="#445"><path d="M3 2V.5h4.500v4H6M.5 2.500H5V6H.500z" fill="#fff" /></Icon>
        </button>
        <button aria-label="Закрыть вид" className={twMerge(winButton, "bg-[#cb4943] border-[#7b2a26]")}>
          <Icon w={8} h={6} color="#fff" sw={2}><path d="M1 .5l6 5M7 .5l-6 5" /></Icon>
        </button>
      </div>
    </div>
    <div className="flex items-center h-[17px] shrink-0 bg-[#f0f0f0] pl-px">
      {viewTools.map((tool) => (
        <div key={tool.label} className="flex items-center">
          <button aria-label={tool.label} className={twMerge("w-[15px] flex justify-center", tool.className)}>
            {tool.icon}
          </button>
          {tool.sep && <Sep className="mx-px h-[13px]" />}
        </div>
      ))}
    </div>
  </>
);

/* Grid reference points of the view */
const gridX = [87, 217, 347, 477, 607, 737, 997, 1127, 1257];
const gridY = [63, 193, 453];

const Drawing = () => (
  <svg className="absolute inset-0 size-full" fill="none" aria-label="Чертеж">
    {gridX.map((x) => gridY.map((y) => <rect key={`${x}-${y}`} x={x} y={y} width="1" height="1" fill="#777" />))}
    <path d="M0 323.500H2000M867.500 0V1200" stroke="#484848" />
    <g transform="translate(-13 -156)">
      <g stroke="#c814cf" strokeWidth="2">
        <circle cx="277" cy="372.500" r="56.500" />
        <circle cx="277" cy="372.500" r="39" />
        <circle cx="277" cy="372.500" r="19.500" />
        <circle cx="423.500" cy="372.500" r="55" />
        <circle cx="423.500" cy="372.500" r="39" />
        <rect x="384.500" y="333.500" width="78" height="78" />
        <circle cx="570" cy="389" r="45" />
        <circle cx="570" cy="389" r="22.500" />
        <path d="M570 344.500L609 411H531z" />
        <circle cx="697.500" cy="372.500" r="32.500" />
        <circle cx="697.500" cy="340" r="32.500" />
        <circle cx="697.500" cy="405" r="32.500" />
        <circle cx="665" cy="372.500" r="32.500" />
        <circle cx="730" cy="372.500" r="32.500" />
        <rect x="147" y="496.500" width="155.500" height="78" rx="39" />
        <path d="M371.500 575h104A66 66 0 0 0 371.500 575zM423.500 549v26" />
        <path d="M531 574h78.500A45 45 0 1 0 531 574zL570 507l39.500 67" />
        <path d="M650 482.500h126v14.500H650zM650 497c32 5 56 31 61 64.500M711 561.500h59V574h-59z" />
      </g>
      <rect x="276.500" y="372" width="1" height="1" fill="#c814cf" />
      <g stroke="#6b6b6b" fill="#161616">
        <path d="M47.500 470v-14h-6L53.500 442.500 65.500 456h-6v14z" />
        <path d="M62.500 473.500h14v-5.500l14 11.500-14 12v-6h-14z" />
        <path d="M49.500 454l4 6 4-6M53.500 460v6M68 475l9 9M77 475l-9 9" stroke="#888" />
        <circle cx="53.500" cy="479.500" r="6" />
      </g>
      <circle cx="53.500" cy="479.500" r="2" fill="#bbb" />
    </g>
  </svg>
);

const modeButton = "w-[14px] h-[14px] flex items-center justify-center";

const BlueSquare = ({ children }: { children: ReactNode }) => (
  <Icon w={16} h={16}>
    <rect x="1.500" y="1.500" width="10" height="10" fill="#2f86b8" stroke="#1d3c50" />
    {children}
  </Icon>
);

const SelectDialog = () => (
  <div role="dialog" aria-label="Выбор элемента" className="absolute left-[617px] top-[25px] w-[180px] bg-[#f0f0f0]">
    <div className="flex items-center h-[20px] bg-white pl-[5px] pr-3">
      <Icon w={12} h={12} color="#666">
        <path d="M1 11l3-7 4-3 2 1-2 3-4 3-1 3zM5 6l5 1-3 4M6 9l4 1" fill="#bbb" strokeWidth=".9" />
      </Icon>
      <span className="pl-[2px]">Выбор элемента</span>
      <div className="flex items-center gap-[23px] ml-auto">
        <button aria-label="Свернуть окно">
          <Icon w={7} h={7} color="#666"><path d="M0 3.500h7" /></Icon>
        </button>
        <button aria-label="Развернуть окно" disabled>
          <Icon w={7} h={7} color="#ccc"><path d="M.5 .5h6v6h-6z" /></Icon>
        </button>
        <button aria-label="Закрыть окно">
          <Icon w={7} h={7} color="#333"><path d="M0 0l7 7M7 0L0 7" /></Icon>
        </button>
      </div>
    </div>
    <div className="flex flex-col gap-[10px] pl-[7px] pr-2 pt-2 pb-[6px]">
      <div className="flex items-center">
        <div className="flex w-[73px] p-px border border-[#bbb]">
          <button aria-label="Индивидуально" className={twMerge(modeButton, "bg-[#94c1df] border border-[#4b89b5]")}>
            <Icon color="#3e91b0"><path d="M6 1v10M1 6h10M6 1l5 5-5 5-5-5z" /></Icon>
          </button>
          <button aria-label="Блок" className={modeButton}>
            <Icon color="#5aa0a6"><rect x="1" y="3" width="10" height="6" strokeDasharray="2 1" /></Icon>
          </button>
          <button aria-label="Форма" className={modeButton}>
            <Icon color="#5aa0a6"><path d="M4 3h7L8 9H1z" strokeDasharray="2 1" /></Icon>
          </button>
          <button aria-label="Окружность" className={modeButton}>
            <Icon color="#5aa0a6"><circle cx="6" cy="6" r="4.500" strokeDasharray="2 1.500" /></Icon>
          </button>
          <button aria-label="Линия" className={modeButton}>
            <Icon color="#5aa0a6"><path d="M2 10l8-8" strokeDasharray="4 1" /></Icon>
          </button>
        </div>
        <button aria-label="Отключить маркеры" className="ml-[14px]">
          <BlueSquare>
            <circle cx="11.500" cy="11.500" r="3.500" fill="#fff" stroke="#cb1830" strokeWidth="1.500" />
            <path d="M9 9l5 5" stroke="#cb1830" strokeWidth="1.500" />
          </BlueSquare>
        </button>
      </div>
      <div className="flex items-center">
        <div className="flex w-[73px] p-px border border-[#bbb]">
          <button aria-label="Новый" className={twMerge(modeButton, "bg-[#94c1df] border border-[#4b89b5]")}>
            <Icon><circle cx="5" cy="5" r="3.500" strokeDasharray="1.500 1" /><path d="M5 3v7l1.500-1.500L8 11l1-.5L8 8h2z" fill="#111" stroke="none" /></Icon>
          </button>
          <button aria-label="Добавить" className={modeButton}>
            <Icon sw={3}><path d="M6 2v8M2 6h8" /></Icon>
          </button>
          <button aria-label="Вычесть" className={modeButton}>
            <Icon sw={3}><path d="M1.500 6h9" /></Icon>
          </button>
          <button aria-label="Инвертировать" className={modeButton}>
            <Icon><rect x="1.500" y="1.500" width="9" height="9" fill="#fff" /><path d="M1 11V11L11 1v10z" fill={BLUE} stroke="none" /></Icon>
          </button>
          <button aria-label="Очистить" className={twMerge(modeButton, "bg-[#f6f6fb] border border-[#7a7f9e]")}>
            <Icon color="#aab"><circle cx="6" cy="6" r="4" strokeDasharray="1.500 1.500" /></Icon>
          </button>
        </div>
        <button aria-label="Выбрать по маркеру" className="ml-[14px]">
          <BlueSquare>
            <path d="M10 6v8.500l2-1.800 1.400 3 1.400-.7-1.400-2.800h2.300z" fill="#111" stroke="none" />
          </BlueSquare>
        </button>
        <button aria-label="Показать список" className="ml-auto mt-2">
          <Icon w={7} h={4}><path d="M0 0h7L3.500 4z" fill="#111" stroke="none" /></Icon>
        </button>
      </div>
    </div>
    <div role="tooltip" className="absolute left-[73px] top-[79px] px-[2px] h-[13px] leading-[11px] bg-white border border-[#888] text-[#555]">
      Очистить
    </div>
    <svg className="absolute left-[71px] top-[63px]" width="9" height="14" viewBox="0 0 9 14" aria-hidden="true">
      <path d="M.5 1v10l2.300-2 1.700 4 1.800-.8-1.700-3.700h3.400z" fill="#fff" stroke="#222" strokeWidth=".9" />
    </svg>
  </div>
);

const Captions = () => (
  <div className="absolute inset-x-0 bottom-[10px] flex justify-between items-center pl-6 pr-8 font-['Lato','Open_Sans',sans-serif] text-[17px] text-[#8a8a8a] pointer-events-none">
    <div className="leading-[23px]">
      <p>3D Master</p>
      <p className="text-[#303030]">www.3dmaster.ru</p>
      <p>Vysotskiy Consulting</p>
      <p className="text-[#303030]">www.bim.vc</p>
    </div>
    <div className="leading-[22px] text-right">
      <p className="text-[#282828]">Ольга Миловская</p>
      <p className="text-[#282828]">Курс: "MicroStation 2D"</p>
      <p>Блок 4: "Геометрия и манипулирование"</p>
      <p>Урок 4.6: "Выделение и метки"</p>
    </div>
  </div>
);

const Workspace = () => (
  <div className="flex flex-1 min-h-0 pr-[2px] bg-[#d4d4d4]">
    <aside className="w-[13px] shrink-0 bg-[#93a2a2] border-l-2 border-[#6f7c7d]">
      <button className="flex flex-col items-center w-[11px] h-[57px] pt-1 bg-[#d9dadb] border-b border-r border-[#888]">
        <Icon w={10} h={8}>
          <path d="M.5 .5h9v7h-9z" fill="#e6f5fc" />
          <path d="M2 3h3v3H2zM7 2v4" />
        </Icon>
        <span className="[writing-mode:vertical-rl] leading-[10px] pt-1">Свойства</span>
      </button>
    </aside>
    <main className="flex-1 min-w-0 flex flex-col">
      <ViewHeader />
      <div className="relative flex-1 min-h-0 bg-black overflow-hidden">
        <Drawing />
        <SelectDialog />
        <Captions />
      </div>
    </main>
  </div>
);

const Arrow = ({ active, flip }: { active?: boolean; flip?: boolean }) => (
  <Icon w={17} h={17}>
    <circle cx="8.500" cy="8.500" r="7.500" fill={active ? "#58b62e" : "#b5b5b5"} stroke={active ? "#3d8f1d" : "#9c9c9c"} />
    <path
      d={flip ? "M13.500 8.500L9 4v3H4v3h5v3z" : "M3.500 8.500L8 4v3h5v3H8v3z"}
      fill={active ? "#fff" : "#e6e6e6"}
      stroke="none"
    />
  </Icon>
);

const Windows = () => (
  <Icon w={17} h={15}>
    <path d="M.5 8V1.500h10V4M.5 2.500h10" strokeWidth="1.300" />
    <path d="M5.500 5.500h11v8h-11z" fill="#fff" />
    <path d="M5 6h12" strokeWidth="2" />
  </Icon>
);

const BottomBar = () => (
  <div className="flex items-center h-[22px] shrink-0 bg-[#d4d4d4] border-t border-[#8a8a8a]">
    <div className="flex items-center h-full bg-[#f0f0f0] w-[307px]">
      <Grip />
      <button aria-label="Назад" className="flex items-center gap-1 pl-px w-[30px]">
        <Arrow active />
        <Caret dark />
      </button>
      <button aria-label="Вперед" className="flex items-center gap-1 w-[28px]">
        <Arrow flip />
        <Caret />
      </button>
      <button aria-label="Модели" className="flex items-center gap-1 w-[29px]">
        <Icon w={18} h={14} color="#76838a">
          <ellipse cx="9" cy="8.500" rx="8" ry="4.500" fill="#a9b6bd" />
          <path d="M2 3l4 4 10-1-2 3-8 1z" fill="#8f9ca4" strokeWidth=".8" />
        </Icon>
        <Caret dark />
      </button>
      <label className="relative flex items-center gap-1 w-[99px] h-[14px] px-px border border-[#bbb] bg-[#e6e6e6]">
        <Icon w={11} h={11}>
          <path d="M.5 6V.5h7V3M3.500 4.500h7v5h-7z" fill="#fff" />
        </Icon>
        <select aria-label="Группа видов" className="appearance-none flex-1 min-w-0 outline-none">
          <option>2D Metric Design</option>
        </select>
        <span className="absolute right-1">
          <Caret dark />
        </span>
      </label>
      <Sep className="mx-[2px]" />
      <button aria-label="Виды">
        <Windows />
      </button>
      <Sep className="mx-[2px]" />
      <div className="flex flex-1">
        {[1, 2, 3, 4, 5, 6, 7, 8].map((view) => (
          <button
            key={view}
            className={twMerge("flex-1 h-[13px] leading-[13px] border-r border-[#777]", view === 1 && "bg-[#6fa9d8] border border-[#44789f] leading-[11px]")}
          >
            {view}
          </button>
        ))}
      </div>
      <Sep className="ml-[2px]" />
    </div>
    <div className="flex items-center h-full bg-[#f0f0f0]">
      <Grip />
      <label className="flex items-center gap-1 pl-2">
        <b className="text-[11px]">X</b>
        <input defaultValue="18761" className="w-[106px] h-3 px-[3px] bg-white border border-[#aaa] text-[#888] outline-none" />
      </label>
      <Sep className="ml-1 mr-[7px] h-full" />
      <label className="flex items-center gap-1 pl-px pr-[11px]">
        <b className="text-[11px]">Y</b>
        <input defaultValue="1550" className="w-[106px] h-3 px-[3px] bg-white border border-[#aaa] text-[#888] outline-none" />
      </label>
    </div>
  </div>
);

const statusCells: { className: string; content?: ReactNode }[] = [
  { className: "w-[19px]", content: <Icon color={TEAL}><path d="M2 10h4V5l4-3" /><circle cx="1.500" cy="10" r="1" /><circle cx="10" cy="2" r="1" /></Icon> },
  { className: "w-5", content: <Icon w={10} h={10} color="#6d6a2a"><path d="M2.500 5V3c0-2.500 5-2.500 5 0v2" stroke="#777" /><rect x="1" y="4.500" width="8" height="5" fill="#b8ae3c" /></Icon> },
  { className: "w-[89px] justify-start pl-[3px]", content: "Default" },
  {
    className: "w-[79px] justify-start pl-[7px] gap-[7px]",
    content: (
      <>
        <Icon w={8} h={11}><path d="M1 0v10l2.500-2.200L5.200 11l1.500-.8L5.200 7H8z" fill="#111" stroke="none" /></Icon>
        : 29
      </>
    ),
  },
  { className: "w-5" },
  { className: "w-5" },
  { className: "w-5" },
  { className: "w-5", content: <Icon color="#888"><path d="M2 1.500h8.500v3H8v4M2 1.500c-1 1 0 3 1 3h3v3H1.500v3H10V8.500" fill="#f5f5f5" /></Icon> },
  { className: "w-5", content: <Icon color="#666"><path d="M1 11l3-7 4-3 2 1-2 3-4 3-1 3zM5 6l5 1-3 4M6 9l4 1" fill="#ccc" /></Icon> },
  { className: "w-5" },
  { className: "w-5", content: <Icon w={10} h={11}><rect x="1.500" y=".5" width="7" height="10" fill="#2a82b8" /><path d="M0 2h2M0 5h2M0 8h2M8 2h2M8 5h2M8 8h2" stroke="#445" /></Icon> },
  { className: "w-5" },
  { className: "w-5", content: <Icon w={11} h={11} color="#999"><path d="M1 1.500h9v5L7 9.500 1 8z" fill="#ddd" /><circle cx="5.500" cy="5" r="2" /></Icon> },
  {
    className: "w-5",
    content: (
      <Icon>
        <circle cx="5" cy="5" r="4.500" fill="#5fb4d4" stroke="#2f86ac" />
        <path d="M1 4h8M5 1v8" stroke="#e4f4fa" />
        <path d="M7 7l4 4M11 7l-4 4" stroke="#c81326" strokeWidth="2" />
      </Icon>
    ),
  },
];

const StatusBar = () => (
  <footer className="flex items-center h-[19px] shrink-0 bg-[#f0f0f0]">
    <span className="pl-[2px] w-[316px]">Очистить</span>
    <Grip />
    <Sep className="mr-[14px]" />
    <Icon w={4} h={14} color="#222">
      <path d="M0 1.500h3.500" />
      <path d="M3.500 1v13" stroke="#777" />
    </Icon>
    <div className="flex ml-auto pr-[3px]">
      {statusCells.map((cell, index) => (
        <div key={index} className={twMerge("h-[15px] flex items-center justify-center border-l border-[#a5a5a5]", cell.className)}>
          {cell.content}
        </div>
      ))}
    </div>
  </footer>
);

export default function App() {
  return (
    <div className="h-screen min-h-0 flex flex-col overflow-hidden bg-[#f0f0f0] font-['Roboto','Noto_Sans',sans-serif] text-[8px] leading-3 text-[#222]">
      <TitleBar />
      <TabBar />
      <Ribbon />
      <SnapBar />
      <Workspace />
      <BottomBar />
      <StatusBar />
    </div>
  );
}
